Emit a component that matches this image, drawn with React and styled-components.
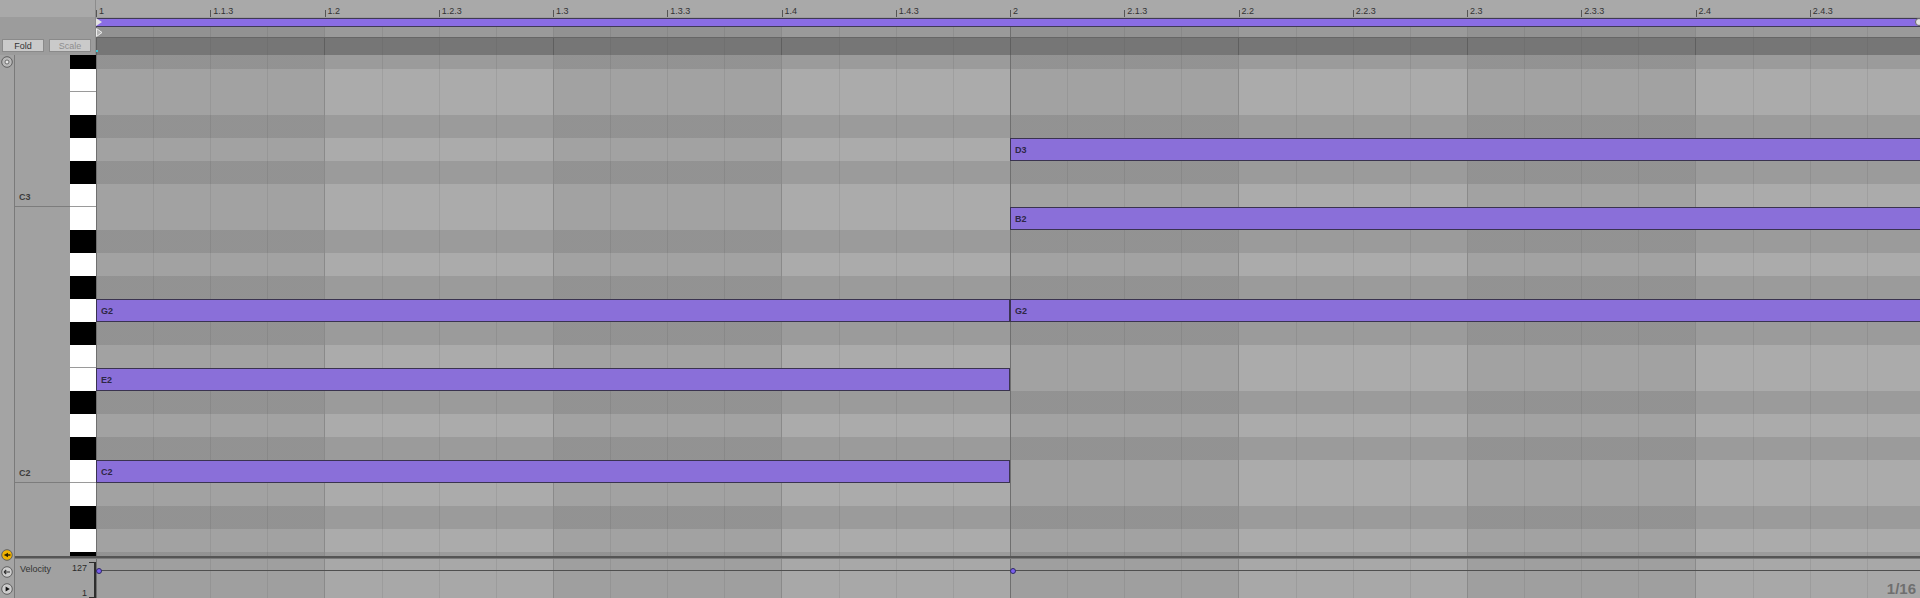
import styled, { createGlobalStyle, css } from "styled-components";

const BAR = 914;
const BEAT = BAR / 4;
const SIXTEENTH = BAR / 16;
const ROW = 23;

const NAMES = ["C", "C#", "D", "D#", "E", "F", "F#", "G", "G#", "A", "A#", "B"];
const BLACK = [1, 3, 6, 8, 10];

// midi 66 (F#3) down to 44 (G#1), Ableton naming (C3 = 60)
const rows = [];
for (let m = 66; m >= 44; m--) {
  const n = m % 12;
  rows.push({
    midi: m,
    name: NAMES[n] + (Math.floor(m / 12) - 2),
    black: BLACK.includes(n),
    pitch: n,
  });
}

const notes = [
  { midi: 62, start: BAR, length: 1100 },
  { midi: 59, start: BAR, length: 1100 },
  { midi: 55, start: 0, length: BAR },
  { midi: 55, start: BAR, length: 1100 },
  { midi: 52, start: 0, length: BAR },
  { midi: 48, start: 0, length: BAR },
];

const rulerMarks = [
  "1", "1.1.3", "1.2", "1.2.3", "1.3", "1.3.3", "1.4", "1.4.3",
  "2", "2.1.3", "2.2", "2.2.3", "2.3", "2.3.3", "2.4", "2.4.3",
];

const GlobalStyle = createGlobalStyle`
  html, body {
    margin: 0;
    padding: 0;
    background: #a0a0a0;
    overflow: hidden;
  }
  body {
    font-family: "Liberation Sans", Arial, sans-serif;
  }
`;

const gridLines = css`
  background-image:
    repeating-linear-gradient(to right, #6f6f6f 0 1px, transparent 1px ${BAR}px),
    repeating-linear-gradient(to right, #8a8a8a 0 1px, transparent 1px ${BEAT}px),
    repeating-linear-gradient(to right, rgba(0, 0, 0, 0.07) 0 1px, transparent 1px ${SIXTEENTH}px),
    repeating-linear-gradient(to right, rgba(0, 0, 0, 0.055) 0 ${BEAT}px, transparent ${BEAT}px ${BEAT * 2}px);
`;

const beatLines = css`
  background-image:
    repeating-linear-gradient(to right, #5f5f5f 0 1px, transparent 1px ${BEAT}px),
    repeating-linear-gradient(to right, rgba(0, 0, 0, 0.05) 0 1px, transparent 1px ${SIXTEENTH}px);
`;

const Window = styled.div`
  width: 1920px;
  height: 598px;
  display: flex;
  flex-direction: column;
  overflow: hidden;
  background: #a0a0a0;
`;

const Header = styled.div`
  height: 55px;
  display: grid;
  grid-template-columns: 96px 1fr;
  flex-shrink: 0;
`;

const HeaderLeft = styled.div`
  display: flex;
  flex-direction: column;
  background: linear-gradient(#a9a9a9 0 17px, #9c9c9c 17px);
  border-right: 1px solid #8c8c8c;
  box-sizing: border-box;
`;

const ButtonRow = styled.div`
  margin-top: auto;
  display: flex;
  gap: 5px;
  padding: 0 2px 3px;
`;

const ToolButton = styled.button`
  width: 42px;
  height: 13px;
  box-sizing: border-box;
  border: 1px solid #8a8a8a;
  background: #cacaca;
  font-family: inherit;
  font-size: 9px;
  line-height: 10px;
  padding: 0;
  color: ${(p) => (p.$dim ? "#8e8e8e" : "#333")};
`;

const HeaderRight = styled.div`
  display: flex;
  flex-direction: column;
  min-width: 0;
  overflow: hidden;
`;

const Ruler = styled.div`
  height: 17px;
  display: flex;
  background: #a9a9a9;
`;

const RulerCell = styled.div`
  flex: 0 0 ${BAR / 8}px;
  display: flex;
  align-items: flex-end;
`;

const Tick = styled.span`
  width: 1px;
  height: 7px;
  background: #555;
`;

const RulerLabel = styled.span`
  font-size: 9px;
  line-height: 10px;
  color: #333;
  margin-left: 2px;
  padding-bottom: 1px;
`;

const LoopStrip = styled.div`
  height: 10px;
  display: flex;
  align-items: center;
  background: #9c9c9c;
  position: relative;
`;

const LoopBar = styled.div`
  flex: 1;
  height: 9px;
  box-sizing: border-box;
  background: #8a6de4;
  border-top: 1px solid #3f3a55;
  border-bottom: 1px solid #3f3a55;
`;

const LoopStart = styled.span`
  position: absolute;
  left: 0;
  top: 1px;
  width: 0;
  height: 0;
  border-top: 4px solid transparent;
  border-bottom: 4px solid transparent;
  border-left: 6px solid #e2e2e2;
`;

const LoopEnd = styled.span`
  position: absolute;
  right: -3px;
  top: 1px;
  width: 8px;
  height: 8px;
  border-radius: 50%;
  background: #e2e2e2;
  border: 1px solid #666;
  box-sizing: border-box;
`;

const MarkerStrip = styled.div`
  height: 11px;
  box-sizing: border-box;
  background-color: #9a9a9a;
  ${gridLines};
  border-bottom: 1px solid #666;
  position: relative;
`;

const MarkerTriangle = styled.svg`
  position: absolute;
  left: 0;
  top: 1px;
`;

const DarkStrip = styled.div`
  height: 17px;
  background-color: #767676;
  ${beatLines};
  position: relative;
`;

const CueDot = styled.span`
  position: absolute;
  left: 0;
  bottom: 3px;
  width: 2px;
  height: 2px;
  background: #3cc8d8;
`;

const Main = styled.div`
  flex: 1;
  min-height: 0;
  display: grid;
  grid-template-columns: 15px 1fr;
`;

const SideStrip = styled.div`
  background: #a4a4a4;
  border-right: 1px solid #7a7a7a;
  box-sizing: border-box;
  display: flex;
  flex-direction: column;
  justify-content: space-between;
  align-items: center;
  padding: 1px 0 3px;
`;

const IconStack = styled.div`
  display: flex;
  flex-direction: column;
  gap: 5px;
`;

const RightCol = styled.div`
  display: flex;
  flex-direction: column;
  min-width: 0;
`;

const Roll = styled.div`
  height: 501px;
  overflow: hidden;
  flex-shrink: 0;
`;

const RollInner = styled.div`
  margin-top: -9px;
  display: flex;
  flex-direction: column;
`;

const Row = styled.div`
  height: ${ROW}px;
  display: grid;
  grid-template-columns: 55px 26px 1fr;
`;

const OctaveLabel = styled.div`
  background: #a1a1a1;
  box-sizing: border-box;
  border-bottom: ${(p) => (p.$line ? "1px solid #7c7c7c" : "none")};
  font-size: 9px;
  font-weight: bold;
  color: #3c3c3c;
  display: flex;
  align-items: flex-end;
  padding: 0 0 4px 4px;
`;

const Key = styled.div`
  box-sizing: border-box;
  background: ${(p) => (p.$black ? "#000" : "#fff")};
  border-bottom: ${(p) => (p.$line ? "1px solid #9a9a9a" : "none")};
`;

const Lane = styled.div`
  position: relative;
  background-color: ${(p) => (p.$black ? "#9b9b9b" : "#ababab")};
  ${gridLines};
`;

const Note = styled.div`
  position: absolute;
  top: 0;
  height: ${ROW}px;
  box-sizing: border-box;
  background: #8a6fd9;
  border: 1px solid #3a3350;
  font-size: 9px;
  font-weight: bold;
  color: #2e2746;
  display: flex;
  align-items: center;
  padding-left: 4px;
`;

const Divider = styled.div`
  height: 2px;
  background: #555;
  border-bottom: 1px solid #7a7a7a;
  flex-shrink: 0;
`;

const Velocity = styled.div`
  flex: 1;
  display: grid;
  grid-template-columns: 81px 1fr;
`;

const VelocityHead = styled.div`
  background: #a1a1a1;
  display: flex;
`;

const VelName = styled.div`
  flex: 1;
  font-size: 9px;
  color: #333;
  padding: 5px 0 0 5px;
`;

const VelScale = styled.div`
  display: flex;
  flex-direction: column;
  justify-content: space-between;
  align-items: flex-end;
  border-right: 2px solid #2e2e2e;
  padding-top: 2px;
  margin-top: 3px;
`;

const ScaleMark = styled.div`
  display: flex;
  align-items: ${(p) => (p.$bottom ? "flex-end" : "flex-start")};
  font-size: 9px;
  line-height: 9px;
  color: #2a2a2a;
  gap: 2px;
  &::after {
    content: "";
    width: 5px;
    height: 1px;
    background: #2e2e2e;
    margin-top: ${(p) => (p.$bottom ? "0" : "-2px")};
  }
`;

const VelLane = styled.div`
  position: relative;
  background-color: #a8a8a8;
  ${gridLines};
`;

const VelLine = styled.div`
  margin-top: 11px;
  height: 1px;
  background: #4f4f4f;
`;

const VelDot = styled.span`
  position: absolute;
  top: 9px;
  width: 6px;
  height: 6px;
  box-sizing: border-box;
  border-radius: 50%;
  background: #7b5ff0;
  border: 1px solid #2f2a66;
`;

const Quantize = styled.span`
  position: absolute;
  right: 4px;
  bottom: 1px;
  font-size: 15px;
  font-weight: bold;
  color: #6f6f6f;
`;

function CircleIcon({ fill, children }) {
  return (
    <svg width="12" height="12" viewBox="0 0 12 12">
      <circle cx="6" cy="6" r="5.3" fill={fill} stroke="#5e5e5e" strokeWidth="1" />
      {children}
    </svg>
  );
}

export default function App() {
  return (
    <Window>
      <GlobalStyle />
      <Header>
        <HeaderLeft>
          <ButtonRow>
            <ToolButton>Fold</ToolButton>
            <ToolButton $dim>Scale</ToolButton>
          </ButtonRow>
        </HeaderLeft>
        <HeaderRight>
          <Ruler>
            {rulerMarks.map((m) => (
              <RulerCell key={m}>
                <Tick />
                <RulerLabel>{m}</RulerLabel>
              </RulerCell>
            ))}
          </Ruler>
          <LoopStrip>
            <LoopBar />
            <LoopStart />
            <LoopEnd />
          </LoopStrip>
          <MarkerStrip>
            <MarkerTriangle width="7" height="9" viewBox="0 0 7 9">
              <path d="M0.5 0.5 L6 4.5 L0.5 8.5 Z" fill="#b4b4b4" stroke="#eee" strokeWidth="1" />
            </MarkerTriangle>
          </MarkerStrip>
          <DarkStrip>
            <CueDot />
          </DarkStrip>
        </HeaderRight>
      </Header>

      <Main>
        <SideStrip>
          <CircleIcon fill="#b9b9b9">
            <circle cx="6" cy="6" r="2" fill="#e8e8e8" stroke="#555" strokeWidth="0.8" />
          </CircleIcon>
          <IconStack>
            <CircleIcon fill="#f1b300">
              <path d="M2.8 6 L7 3.8 L7 8.2 Z" fill="#2a2000" />
              <path d="M7 6 H9.4" stroke="#2a2000" strokeWidth="1.4" />
            </CircleIcon>
            <CircleIcon fill="#cdcdcd">
              <path d="M3 6 H9 M3 6 L5.2 4 M3 6 L5.2 8" stroke="#333" strokeWidth="1.1" fill="none" />
            </CircleIcon>
            <CircleIcon fill="#cdcdcd">
              <path d="M4.6 3.4 L8.8 6 L4.6 8.6 Z" fill="#111" />
            </CircleIcon>
          </IconStack>
        </SideStrip>

        <RightCol>
          <Roll>
            <RollInner>
              {rows.map((r) => (
                <Row key={r.midi}>
                  <OctaveLabel $line={r.pitch === 0}>{r.pitch === 0 ? r.name : ""}</OctaveLabel>
                  <Key $black={r.black} $line={r.pitch === 0 || r.pitch === 5} />
                  <Lane $black={r.black}>
                    {notes
                      .filter((n) => n.midi === r.midi)
                      .map((n) => (
                        <Note key={n.start} style={{ left: n.start, width: n.length }}>
                          {r.name}
                        </Note>
                      ))}
                  </Lane>
                </Row>
              ))}
            </RollInner>
          </Roll>
          <Divider />
          <Velocity>
            <VelocityHead>
              <VelName>Velocity</VelName>
              <VelScale>
                <ScaleMark>127</ScaleMark>
                <ScaleMark $bottom>1</ScaleMark>
              </VelScale>
            </VelocityHead>
            <VelLane>
              <VelLine />
              {[0, BAR].map((x) => (
                <VelDot key={x} style={{ left: x }} />
              ))}
              <Quantize>1/16</Quantize>
            </VelLane>
          </Velocity>
        </RightCol>
      </Main>
    </Window>
  );
}
